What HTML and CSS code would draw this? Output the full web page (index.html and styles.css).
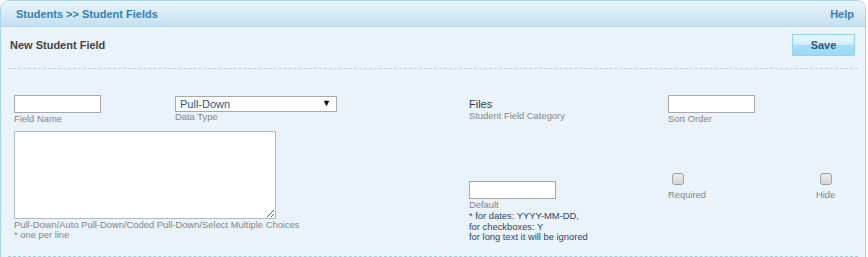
FILE: index.html
```html
<!DOCTYPE html>
<html lang="en">
<head>
  <meta charset="UTF-8">
  <title>Student Fields</title>
  <link rel="stylesheet" href="styles.css">
</head>
<body>
  <div class="panel">
    <div class="panel-head">
      <span class="crumbs">Students &gt;&gt; Student Fields</span>
      <span class="help">Help</span>
    </div>

    <div class="panel-body">
      <div class="form-top">
        <h2>New Student Field</h2>
        <button class="save-btn">Save</button>
      </div>

      <div class="fields">
        <!-- row 1 -->
        <div class="cell">
          <input type="text" class="txt">
          <div class="lbl">Field Name</div>
        </div>
        <div class="cell">
          <div class="select-wrap">
            <select class="sel"><option>Pull-Down</option></select>
          </div>
          <div class="lbl">Data Type</div>
        </div>
        <div class="cell cat">
          <div class="value">Files</div>
          <div class="lbl">Student Field Category</div>
        </div>
        <div class="cell span2">
          <input type="text" class="txt">
          <div class="lbl">Sort Order</div>
        </div>

        <!-- row 2 -->
        <div class="cell span2 choices">
          <textarea class="area"></textarea>
          <div class="lbl">Pull-Down/Auto Pull-Down/Coded Pull-Down/Select Multiple Choices</div>
          <div class="lbl">* one per line</div>
        </div>
        <div class="cell default">
          <input type="text" class="txt">
          <div class="lbl">Default</div>
          <div class="note">* for dates: YYYY-MM-DD,</div>
          <div class="note">for checkboxes: Y</div>
          <div class="note">for long text it will be ignored</div>
        </div>
        <div class="cell check">
          <input type="checkbox" class="chk">
          <div class="lbl">Required</div>
        </div>
        <div class="cell check">
          <input type="checkbox" class="chk">
          <div class="lbl">Hide</div>
        </div>
      </div>
    </div>
  </div>
</body>
</html>
```

FILE: styles.css
```css
/* Page */
body {
  margin: 0;
  font-family: 'Liberation Sans', Arial, sans-serif;
  background: #fff;
}

/* Outer panel */
.panel {
  width: 864px;
  height: 257px;
  border: 1px solid #a9d3ea;
  border-bottom: none;
  border-radius: 9px 9px 0 0;
  background: #eaf3f9;
  overflow: hidden;
}

/* Header bar */
.panel-head {
  height: 25px;
  display: flex;
  justify-content: space-between;
  align-items: center;
  padding: 0 11px 0 15px;
  background: linear-gradient(#eaf5fb, #c2e1f1);
  border-bottom: 1px solid #b0d6ea;
  font-size: 11px;
  font-weight: bold;
  color: #3a7cb0;
}

.panel-body {
  padding: 0 7px 0 7px;
}

/* Title row with save button */
.form-top {
  display: flex;
  justify-content: space-between;
  align-items: center;
  padding: 7px 3px 12px 2px;
  border-bottom: 1px dashed #b7cfdc;
}

.form-top h2 {
  margin: -1px 0 0 0;
  font-size: 11px;
  color: #444;
}

.save-btn {
  width: 63px;
  height: 22px;
  border: 1px solid #8fd3f5;
  background: linear-gradient(#e6f6fd 0%, #d6effb 45%, #a9def8 52%, #9bd8f6 100%);
  font-family: inherit;
  font-size: 11px;
  font-weight: bold;
  color: #2e5878;
  padding: 0;
}

/* Fields grid */
.fields {
  display: grid;
  grid-template-columns: 161px 294px 199px 148px 40px;
  padding: 26px 0 0 6px;
  height: 161px;
  border-bottom: 1px dashed #a9cfe2;
  align-content: start;
}

.span2 {
  grid-column: span 2;
}

.lbl {
  font-size: 9.4px;
  line-height: 10px;
  color: #868686;
}

.txt {
  display: block;
  width: 87px;
  height: 18px;
  box-sizing: border-box;
  border: 1px solid #a9a9a9;
  background: #fff;
  margin: 0 0 1px 0;
  padding: 0;
}

/* Select box with a drawn arrow */
.select-wrap {
  position: relative;
  width: 162px;
  margin-top: 1px;
}

.select-wrap::after {
  content: "▼";
  position: absolute;
  right: 6px;
  top: 2px;
  font-size: 9px;
  color: #000;
  pointer-events: none;
}

.sel {
  display: block;
  appearance: none;
  -webkit-appearance: none;
  width: 162px;
  height: 16px;
  border: 1px solid #a9a9a9;
  border-radius: 0;
  background: #fff;
  padding: 0 0 0 4px;
  font-family: inherit;
  font-size: 11px;
  color: #1d5a88;
}

.cat {
  padding-top: 4px;
}

.cat .value {
  font-size: 11px;
  line-height: 11px;
  color: #1e3d5c;
  margin-bottom: 1px;
}

/* Second row */
.choices {
  padding-top: 7px;
}

.area {
  display: block;
  width: 262px;
  height: 88px;
  box-sizing: border-box;
  border: 1px solid #a8bfca;
  background: #fff;
  margin: 0 0 1px 0;
  resize: both;
}

.default {
  padding-top: 57px;
}

.note {
  font-size: 9.4px;
  line-height: 10.5px;
  color: #2a4866;
}

.default .lbl {
  margin-bottom: 1px;
}

.check {
  padding-top: 49px;
}

.chk {
  appearance: none;
  -webkit-appearance: none;
  display: block;
  width: 12px;
  height: 12px;
  margin: 0 0 5px 4px;
  border: 1px solid #a0a0a0;
  border-radius: 3px;
  background: linear-gradient(#ececec, #d6d6d6);
}
```
